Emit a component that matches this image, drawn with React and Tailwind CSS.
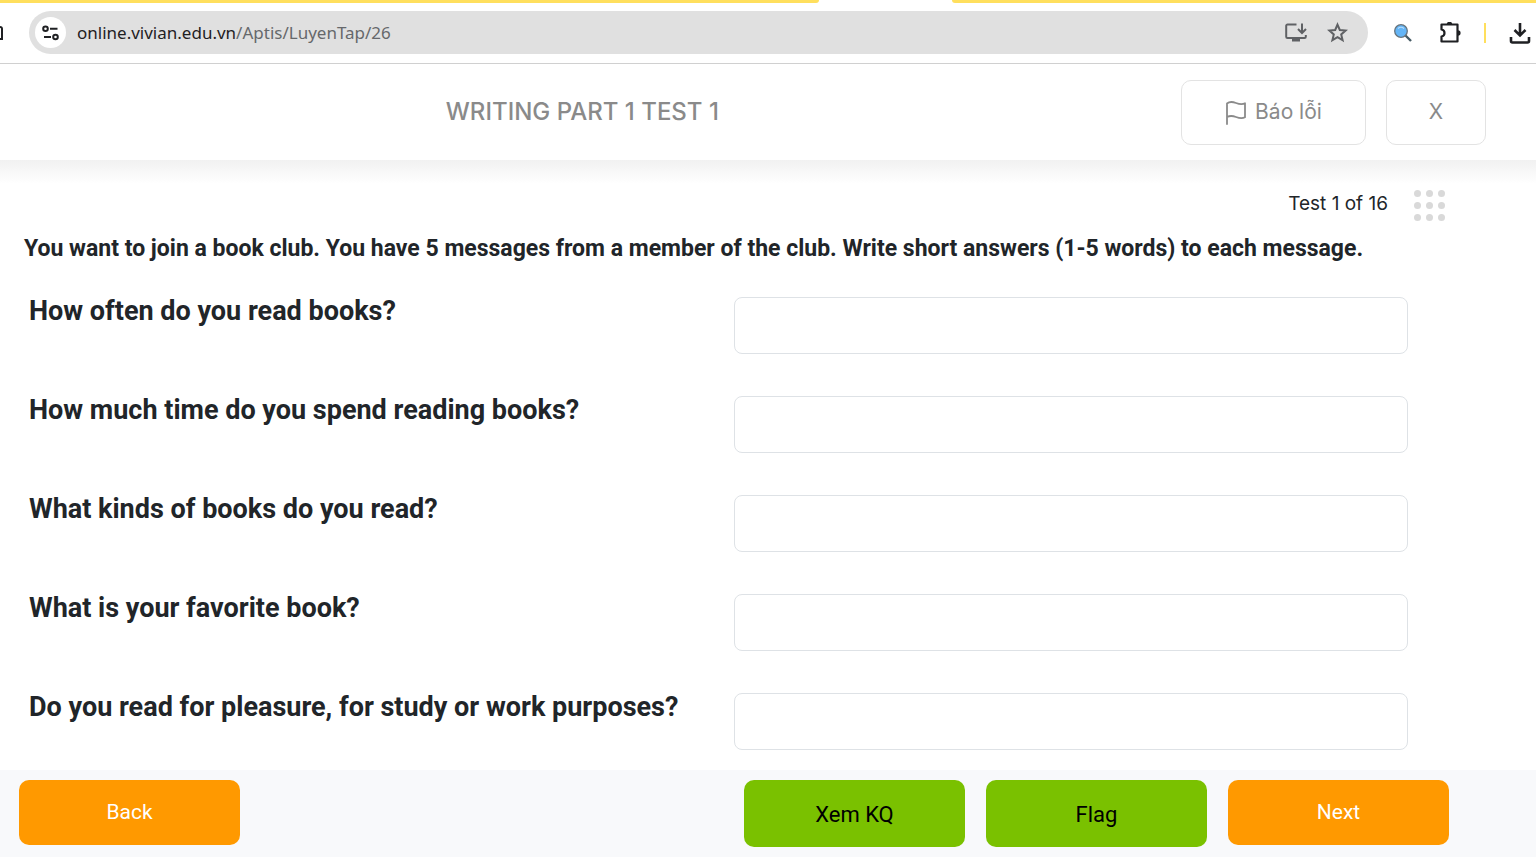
import React from 'react';

const questions = [
  'How often do you read books?',
  'How much time do you spend reading books?',
  'What kinds of books do you read?',
  'What is your favorite book?',
  'Do you read for pleasure, for study or work purposes?',
];

function BrowserBar() {
  return (
    <div className="border-b border-[#d0d0d0] bg-white">
      {/* Bottom edge of the tab strip */}
      <div className="flex h-[3px] justify-between">
        <div className="w-[53.3%] rounded-br-full bg-[#ffdf5d]" />
        <div className="w-[38%] rounded-bl-full bg-[#ffdf5d]" />
      </div>
      <div className="flex items-center pt-2 pb-[9px]">
        <button aria-label="Home" className="mr-[26px] h-3.5 w-[3px] rounded-tr-sm border-t-2 border-r-2 border-b-2 border-[#1f2023]" />
        <div className="flex h-[43px] flex-1 items-center rounded-full bg-[#e0e0e0] pl-1.5">
          <button aria-label="Site information" className="flex h-[31px] w-[31px] items-center justify-center rounded-full bg-white">
            <svg width="18" height="18" viewBox="0 0 18 18" fill="none" stroke="#1f2023" strokeWidth="2">
              <circle cx="3.500" cy="4.700" r="2.300" />
              <path d="M8 4.700H15.500M2 13h7" />
              <circle cx="13.500" cy="13" r="2.300" />
            </svg>
          </button>
          <a href="#address" className="ml-[11px] flex-1 font-['Noto_Sans',sans-serif] text-[17px] text-[#1f2023]">
            online.vivian.edu.vn<span className="text-[#66686b]">/Aptis/LuyenTap/26</span>
          </a>
          <button aria-label="Install app" className="mr-[19px]">
            <svg width="24" height="22" viewBox="0 0 24 22" fill="none" stroke="#5f6164" strokeWidth="2">
              <path d="M12.500 2.500H3.500a1.300 1.300 0 0 0-1.300 1.300v11a1.300 1.300 0 0 0 1.300 1.300h17a1.300 1.300 0 0 0 1.300-1.300V13" />
              <path d="M18 1.500v9M14 7l4 4 4-4" />
              <path d="M8 18h8" strokeWidth="3" />
            </svg>
          </button>
          <button aria-label="Bookmark" className="mr-5">
            <svg width="21" height="21" viewBox="0 0 21 21" fill="none" stroke="#5f6164" strokeWidth="2">
              <path d="M10.500 2.600l2.300 5.400 5.900.5-4.500 3.900 1.400 5.700-5.100-3-5.100 3 1.400-5.700L2.300 8.500l5.900-.5z" />
            </svg>
          </button>
        </div>
        <button aria-label="Search" className="ml-[25px]">
          <svg width="20" height="20" viewBox="0 0 20 20">
            <path d="M12.500 12.500l5.500 5.500" stroke="#455a64" strokeWidth="2.400" />
            <circle cx="8" cy="8" r="6.300" fill="#64b5f6" stroke="#66737c" strokeWidth="1.300" />
            <path d="M5 5.500q3-2.500 6 0" fill="none" stroke="#bbdefb" strokeWidth="1.200" />
          </svg>
        </button>
        <button aria-label="Extensions" className="ml-[26px]">
          <svg width="22" height="22" viewBox="0 0 22 22">
            <path
              d="M2.500 2.500h16v17h-16v-5q3-.5 3-3.500t-3-3.500z"
              fill="none"
              stroke="#1f2023"
              strokeWidth="2.200"
              strokeLinejoin="round"
            />
            <path d="M7.700 2.500a2.800 2.800 0 0 1 5.600 0zM18.800 8.200a2.800 2.800 0 0 1 0 5.600z" fill="#1f2023" />
          </svg>
        </button>
        <div className="ml-[23px] h-5 w-0.5 bg-[#ffdf5d]" />
        <button aria-label="Downloads" className="mr-1 ml-[22px]">
          <svg width="24" height="24" viewBox="0 0 24 24" fill="none" stroke="#1f2023" strokeWidth="2.600">
            <path d="M12 2v12M6.500 9l5.500 5.500L17.500 9" />
            <path d="M3 16v4a1.500 1.500 0 0 0 1.500 1.500h15A1.500 1.500 0 0 0 21 20v-4" />
          </svg>
        </button>
      </div>
    </div>
  );
}

function TestHeader() {
  return (
    <header className="bg-white text-[#8a8a8a]">
      <div className="flex h-24 items-center justify-end pr-[50px]">
        <h1 className="mr-auto ml-[30%] font-['Inter',sans-serif] text-2xl font-medium">WRITING PART 1 TEST 1</h1>
        <div className="flex gap-5 font-['Inter',sans-serif] text-[21px]">
          <button className="flex h-[65px] w-[185px] items-center justify-center gap-2 rounded-[10px] border border-[#e3e3e3]">
            <svg width="22" height="25" viewBox="0 0 22 25" fill="none" stroke="#8a8a8a" strokeWidth="1.800" strokeLinecap="round" strokeLinejoin="round">
              <path d="M2 24V3.500C5 1 8.500 2 11 3s6 2 9 .3v14c-3 1.700-6.500.7-9-.3s-6-1.500-9 0" />
            </svg>
            Báo lỗi
          </button>
          <button className="h-[65px] w-[100px] rounded-[10px] border border-[#e3e3e3]">X</button>
        </div>
      </div>
      {/* Soft shadow under the header */}
      <div className="h-6 bg-linear-to-b from-[#f1f1f1] to-white" />
    </header>
  );
}

function TestFooter() {
  return (
    <footer className="flex h-[87px] items-start bg-[#f8f9fb] pt-2.5 pr-[87px] pl-[19px] text-[21px]">
      <button className="mr-auto h-[65px] w-[221px] rounded-[10px] bg-[#ff9900] text-white">Back</button>
      <div className="flex items-start gap-[21px]">
        <button className="h-[67px] w-[221px] rounded-[10px] bg-[#7ac100] pt-0.5 text-[22px] text-black">Xem KQ</button>
        <button className="h-[67px] w-[221px] rounded-[10px] bg-[#7ac100] pt-0.5 text-[22px] text-black">Flag</button>
        <button className="h-[65px] w-[221px] rounded-[10px] bg-[#ff9900] text-white">Next</button>
      </div>
    </footer>
  );
}

function App() {
  return (
    <div className="bg-white font-['Roboto',sans-serif] text-[#212529]">
      <BrowserBar />
      <TestHeader />

      <main className="pb-5">
        <div className="flex items-center justify-end gap-[26px] pt-1.5 pr-[91px]">
          <span className="pb-0.5 font-['Inter',sans-serif] text-[19px]">Test 1 of 16</span>
          <button aria-label="Question list" className="grid grid-cols-3 gap-[5px]">
            {[...Array(9)].map((_, i) => (
              <span key={i} className="h-[7px] w-[7px] rounded-full bg-[#d9d9d9]" />
            ))}
          </button>
        </div>

        <p className="mt-3 pl-6 text-[23px] leading-8 font-bold">
          You want to join a book club. You have 5 messages from a member of the club. Write short answers (1-5 words) to each message.
        </p>

        <div className="mt-8 flex flex-col gap-[42px] pr-32 pl-[29px]">
          {questions.map((question, i) => (
            <div key={question} className="grid grid-cols-[705fr_674fr] items-start">
              <label htmlFor={`answer-${i}`} className="text-[27px] leading-7 font-bold">
                {question}
              </label>
              <input id={`answer-${i}`} type="text" className="h-[57px] w-full rounded-lg border border-[#dee2e6] px-4 text-xl" />
            </div>
          ))}
        </div>
      </main>

      <TestFooter />
    </div>
  );
}

export default App;
